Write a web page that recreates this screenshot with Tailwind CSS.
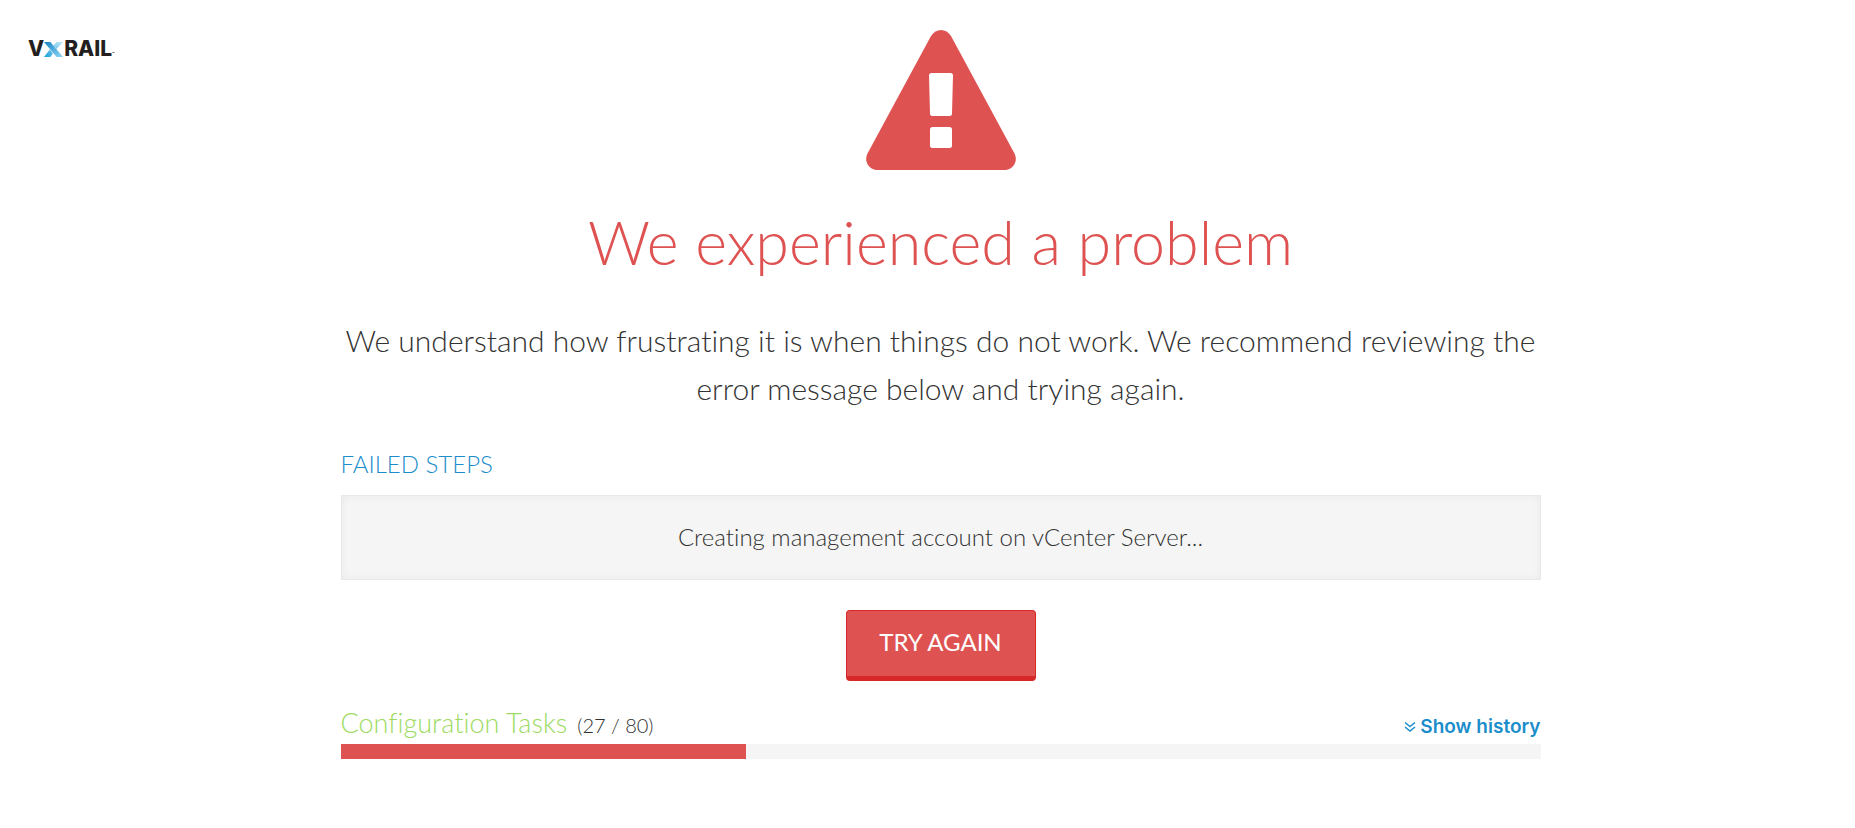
<!DOCTYPE html>
<html lang="en">
<head>
  <meta charset="UTF-8" />
  <meta name="viewport" content="width=device-width, initial-scale=1.0" />
  <title>VxRail - We experienced a problem</title>
  <script src="https://cdn.jsdelivr.net/npm/@tailwindcss/browser@4"></script>
</head>
<body class="bg-white min-h-screen pl-[26px] font-['Lato',sans-serif] font-light text-[#333333] [font-variant-ligatures:none]">

  <header class="absolute left-7 top-9">
    <a href="#" aria-label="VxRail" class="flex items-center font-['Inter',sans-serif] text-[21px] leading-[26px] font-extrabold text-[#231f20]">
      <span>V</span>
      <svg class="w-[19px] h-[15px] mr-px" viewBox="0 0 18 15" preserveAspectRatio="none" aria-hidden="true">
        <defs>
          <linearGradient id="dark" x1="0" y1="0" x2="1" y2="1">
            <stop offset="0" stop-color="#1482c5" />
            <stop offset="1" stop-color="#8fd8f4" />
          </linearGradient>
          <linearGradient id="pale" x1="0" y1="1" x2="1" y2="0">
            <stop offset="0" stop-color="#1ba0da" />
            <stop offset="1" stop-color="#c5eafa" />
          </linearGradient>
        </defs>
        <path d="M12 0h6l-6 7-3-3.500zM0 15l5.500-7.500 3 4L6 15z" fill="url(#pale)" />
        <path d="M0 0h6l12 15h-6z" fill="url(#dark)" />
      </svg>
      <span>RAIL</span><span class="self-end text-[4px] leading-4">™</span>
    </a>
  </header>

  <main class="max-w-[1200px] mx-auto pt-[30px]">

    <svg class="block mx-auto w-[150px] h-[140px]" viewBox="0 0 150 140" role="img" aria-label="Error">
      <path d="M65 6Q69 0 75 0T85 6L148.500 123.500C152.500 131 147 140 139 140H11C3 140 -2.500 131 1.500 123.500Z" fill="#de5252" />
      <path d="M65.500 43h19q2.500 0 2.500 2.500l-1 38q0 2.500-2.500 2.500h-17q-2.500 0-2.500-2.500l-1-38q0-2.500 2.500-2.500z" fill="#fff" />
      <rect x="64" y="97" width="22" height="21" rx="2.500" fill="#fff" />
    </svg>

    <h1 class="mt-8 text-center text-[61px] leading-[80px] text-[#de5252]">We experienced a problem</h1>

    <p class="mt-[34px] text-center text-[30px] leading-[48px]">We understand how frustrating it is when things do not work. We recommend reviewing the error message below and trying again.</p>

    <h2 class="mt-9 text-2xl leading-8 text-[#1b8dcb]">FAILED STEPS</h2>
    <div class="mt-[15px] pt-[23px] pb-[25px] text-center text-2xl leading-[35px] bg-[#f5f5f5] border border-[#e9e9e9] shadow-[inset_0_0_8px_rgba(0,0,0,0.05)]">Creating management account on vCenter Server...</div>

    <button type="button" class="block mx-auto mt-[30px] w-[190px] h-[71px] pb-1 rounded text-2xl font-normal text-white bg-[#de5252] border border-b-[5px] border-[#d62828] cursor-pointer">TRY AGAIN</button>

    <div class="mt-6 flex items-end justify-between">
      <div class="flex items-baseline gap-[10px]">
        <h2 id="tasks" class="text-[27px] leading-9 text-[#9ddb62]">Configuration Tasks</h2>
        <span class="text-xl">(27 / 80)</span>
      </div>
      <a href="#" class="flex items-center gap-1 font-['Inter',sans-serif] text-[19px] leading-7 font-semibold text-[#1b8dcb]">
        <svg class="w-3 h-3" viewBox="0 0 12 12" fill="none" stroke="currentColor" stroke-width="1.500" aria-hidden="true">
          <path d="M1 1.500l5 4 5-4M1 6l5 4 5-4" />
        </svg>
        Show history
      </a>
    </div>
    <div role="progressbar" aria-labelledby="tasks" aria-valuemin="0" aria-valuemax="80" aria-valuenow="27" class="mt-[3px] h-[15px] bg-[#f5f5f5]">
      <div class="h-full bg-[#de5252]" style="width: 33.75%"></div>
    </div>

  </main>

</body>
</html>
